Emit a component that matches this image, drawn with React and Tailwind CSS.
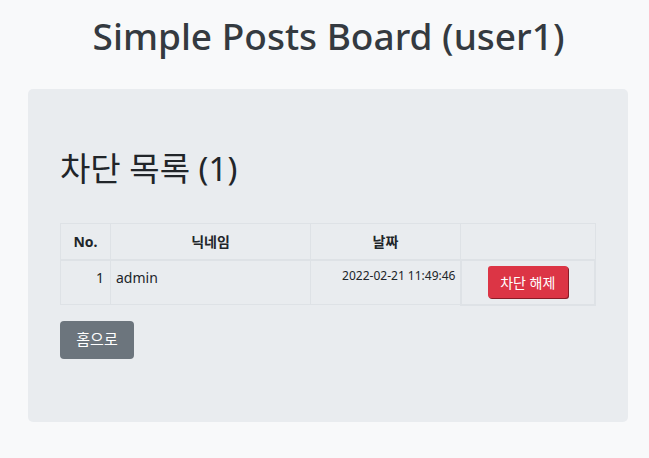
import React from 'react'

// Blocked users list page
export default function App() {
  const rows = [{ no: 1, nick: 'admin', date: '2022-02-21 11:49:46' }]

  return (
    <div className="min-h-[458px] w-[649px] bg-[#f8f9fa] text-[#212529] font-['Noto_Sans','Noto_Sans_CJK_KR',sans-serif]">
      <h1 className="pl-[8px] pt-[10px] text-center text-[37px] font-medium leading-[52px] text-[#343a40]">
        Simple Posts Board (user1)
      </h1>
      <div className="ml-[28px] mt-[27px] h-[333px] w-[600px] rounded-[5px] bg-[#e9ecef] px-[32px] pt-[58px]">
        <h2 className="text-[33px] leading-[44px] font-normal">차단 목록 (1)</h2>
        <table className="mt-[32px] w-[536px] border-collapse text-[14px]">
          <thead>
            <tr className="h-[36px] border-b-2 border-[#dee2e6]">
              <th className="w-[50px] border border-[#dee2e6] font-bold">No.</th>
              <th className="w-[200px] border border-[#dee2e6] font-bold">닉네임</th>
              <th className="w-[150px] border border-[#dee2e6] font-bold">날짜</th>
              <th className="border border-[#dee2e6]"></th>
            </tr>
          </thead>
          <tbody>
            {rows.map(r => (
              <tr key={r.no} className="h-[45px]">
                <td className="border border-[#dee2e6] pr-[6px] pt-[6px] text-right align-top">{r.no}</td>
                <td className="border border-[#dee2e6] pl-[5px] pt-[6px] align-top">{r.nick}</td>
                <td className="border border-[#dee2e6] pr-[4px] pt-[6px] text-right align-top text-[12px]">{r.date}</td>
                <td className="border-2 border-[#dee2e6] text-center align-middle">
                  <button className="h-[32px] w-[80px] rounded-[3px] bg-[#dc3545] text-[14px] text-white shadow-[1px_1px_0_#8a1c27]">
                    차단 해제
                  </button>
                </td>
              </tr>
            ))}
          </tbody>
        </table>
        <button className="mt-[15px] h-[38px] w-[74px] rounded-[4px] bg-[#6c757d] text-[15px] text-white">
          홈으로
        </button>
      </div>
    </div>
  )
}
